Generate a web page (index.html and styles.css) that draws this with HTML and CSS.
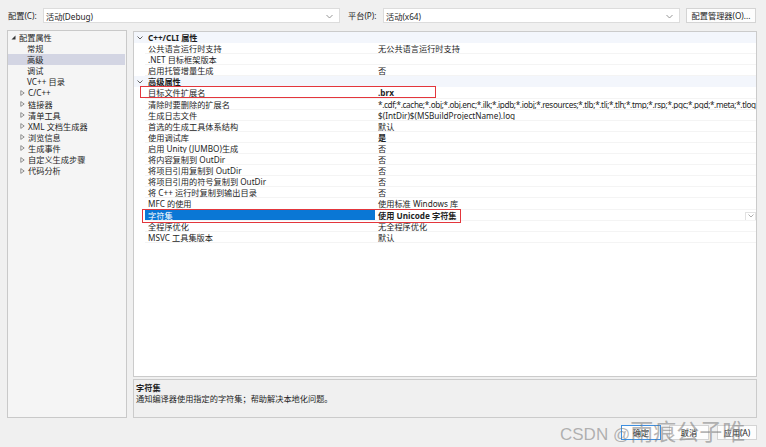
FILE: index.html
```html
<!DOCTYPE html>
<html lang="zh-CN">
<head>
    <meta charset="UTF-8">
    <meta name="viewport" content="width=device-width, initial-scale=1.0">
    <title>属性页</title>
    <link rel="stylesheet" href="styles.css">
</head>
<body>
    <div class="dialog">
        <div class="topbar">
            <span class="lbl">配置(C):</span>
            <div class="combo">
                <span>活动(Debug)</span>
                <svg class="chev" width="7" height="5" viewBox="0 0 7 5"><path d="M0.5 1 L3.5 4 L6.5 1" fill="none" stroke="#8a8a8a" stroke-width="0.9"/></svg>
            </div>
            <span class="lbl plat">平台(P):</span>
            <div class="combo">
                <span>活动(x64)</span>
                <svg class="chev" width="7" height="5" viewBox="0 0 7 5"><path d="M0.5 1 L3.5 4 L6.5 1" fill="none" stroke="#8a8a8a" stroke-width="0.9"/></svg>
            </div>
            <div class="btn mgr">配置管理器(O)...</div>
        </div>

        <div class="main">
            <div class="tree">
                <div class="node root">
                    <svg class="tri" width="5" height="5" viewBox="0 0 5 5"><path d="M4.5 0.5 L4.5 4.5 L0.5 4.5 Z" fill="#333"/></svg>
                    配置属性
                </div>
                <div class="node leaf">常规</div>
                <div class="node leaf selected">高级</div>
                <div class="node leaf">调试</div>
                <div class="node leaf">VC++ 目录</div>
                <div class="node group"><svg class="tri" width="5" height="6" viewBox="0 0 5 6"><path d="M0.8 0.6 L4.2 3 L0.8 5.4 Z" fill="none" stroke="#777" stroke-width="0.8"/></svg>C/C++</div>
                <div class="node group"><svg class="tri" width="5" height="6" viewBox="0 0 5 6"><path d="M0.8 0.6 L4.2 3 L0.8 5.4 Z" fill="none" stroke="#777" stroke-width="0.8"/></svg>链接器</div>
                <div class="node group"><svg class="tri" width="5" height="6" viewBox="0 0 5 6"><path d="M0.8 0.6 L4.2 3 L0.8 5.4 Z" fill="none" stroke="#777" stroke-width="0.8"/></svg>清单工具</div>
                <div class="node group"><svg class="tri" width="5" height="6" viewBox="0 0 5 6"><path d="M0.8 0.6 L4.2 3 L0.8 5.4 Z" fill="none" stroke="#777" stroke-width="0.8"/></svg>XML 文档生成器</div>
                <div class="node group"><svg class="tri" width="5" height="6" viewBox="0 0 5 6"><path d="M0.8 0.6 L4.2 3 L0.8 5.4 Z" fill="none" stroke="#777" stroke-width="0.8"/></svg>浏览信息</div>
                <div class="node group"><svg class="tri" width="5" height="6" viewBox="0 0 5 6"><path d="M0.8 0.6 L4.2 3 L0.8 5.4 Z" fill="none" stroke="#777" stroke-width="0.8"/></svg>生成事件</div>
                <div class="node group"><svg class="tri" width="5" height="6" viewBox="0 0 5 6"><path d="M0.8 0.6 L4.2 3 L0.8 5.4 Z" fill="none" stroke="#777" stroke-width="0.8"/></svg>自定义生成步骤</div>
                <div class="node group"><svg class="tri" width="5" height="6" viewBox="0 0 5 6"><path d="M0.8 0.6 L4.2 3 L0.8 5.4 Z" fill="none" stroke="#777" stroke-width="0.8"/></svg>代码分析</div>
            </div>

            <div class="right">
                <div class="grid">
                    <div class="row section">
                        <div class="exp"><svg width="6" height="4" viewBox="0 0 6 4"><path d="M0.5 0.5 L3 3 L5.5 0.5" fill="none" stroke="#555" stroke-width="0.9"/></svg></div>
                        <div class="name">C++/CLI 属性</div>
                        <div class="value"></div>
                    </div>
                    <div class="row"><div class="exp"></div><div class="name">公共语言运行时支持</div><div class="value">无公共语言运行时支持</div></div>
                    <div class="row"><div class="exp"></div><div class="name">.NET 目标框架版本</div><div class="value"></div></div>
                    <div class="row"><div class="exp"></div><div class="name">启用托管增量生成</div><div class="value">否</div></div>
                    <div class="row section">
                        <div class="exp"><svg width="6" height="4" viewBox="0 0 6 4"><path d="M0.5 0.5 L3 3 L5.5 0.5" fill="none" stroke="#555" stroke-width="0.9"/></svg></div>
                        <div class="name">高级属性</div>
                        <div class="value"></div>
                    </div>
                    <div class="row marked first"><div class="exp"></div><div class="name">目标文件扩展名</div><div class="value bold">.brx</div></div>
                    <div class="row"><div class="exp"></div><div class="name">清除时要删除的扩展名</div><div class="value long">*.cdf;*.cache;*.obj;*.obj.enc;*.ilk;*.ipdb;*.iobj;*.resources;*.tlb;*.tli;*.tlh;*.tmp;*.rsp;*.pgc;*.pgd;*.meta;*.tlog</div></div>
                    <div class="row"><div class="exp"></div><div class="name">生成日志文件</div><div class="value">$(IntDir)$(MSBuildProjectName).log</div></div>
                    <div class="row"><div class="exp"></div><div class="name">首选的生成工具体系结构</div><div class="value">默认</div></div>
                    <div class="row"><div class="exp"></div><div class="name">使用调试库</div><div class="value bold">是</div></div>
                    <div class="row"><div class="exp"></div><div class="name">启用 Unity (JUMBO)生成</div><div class="value">否</div></div>
                    <div class="row"><div class="exp"></div><div class="name">将内容复制到 OutDir</div><div class="value">否</div></div>
                    <div class="row"><div class="exp"></div><div class="name">将项目引用复制到 OutDir</div><div class="value">否</div></div>
                    <div class="row"><div class="exp"></div><div class="name">将项目引用的符号复制到 OutDir</div><div class="value">否</div></div>
                    <div class="row"><div class="exp"></div><div class="name">将 C++ 运行时复制到输出目录</div><div class="value">否</div></div>
                    <div class="row"><div class="exp"></div><div class="name">MFC 的使用</div><div class="value">使用标准 Windows 库</div></div>
                    <div class="row marked second active">
                        <div class="exp"></div>
                        <div class="name">字符集</div>
                        <div class="value bold">使用 Unicode 字符集
                            <span class="drop"><svg width="6" height="4" viewBox="0 0 6 4"><path d="M0.5 0.5 L3 3 L5.5 0.5" fill="none" stroke="#999" stroke-width="0.8"/></svg></span>
                        </div>
                    </div>
                    <div class="row"><div class="exp"></div><div class="name">全程序优化</div><div class="value">无全程序优化</div></div>
                    <div class="row"><div class="exp"></div><div class="name">MSVC 工具集版本</div><div class="value">默认</div></div>
                </div>
                <div class="desc">
                    <div class="desc-title">字符集</div>
                    <div class="desc-text">通知编译器使用指定的字符集；帮助解决本地化问题。</div>
                </div>
            </div>
        </div>

        <div class="footer">
            <div class="btn ok">确定</div>
            <div class="btn">取消</div>
            <div class="btn">应用(A)</div>
            <div class="watermark">CSDN @<span class="cjk">雨痕公子唯</span></div>
        </div>
    </div>
</body>
</html>
```

FILE: styles.css
```css
body {
    margin: 0;
    padding: 0;
    background-color: #f0f0f0;
    font-family: "Noto Sans", "Noto Sans CJK SC", sans-serif;
    font-size: 8.2px;
    color: #1e1e1e;
}

.dialog {
    width: 766px;
    height: 447px;
    position: relative;
    overflow: hidden;
}

.topbar {
    display: flex;
    align-items: center;
    padding: 8px 0 0 8px;
    height: 15px;
}

.lbl {
    width: 35px;
    line-height: 15px;
}

.lbl.plat {
    margin-left: 8px;
}

.combo {
    width: 287px;
    height: 13px;
    border: 1px solid #dcdcdc;
    background-color: #fff;
    display: flex;
    align-items: center;
    justify-content: space-between;
    padding: 0 6px 0 2px;
}

.chev {
    margin-top: 1px;
}

.btn {
    height: 13px;
    line-height: 13px;
    border: 1px solid #d4d4d4;
    background-color: #fdfdfd;
    text-align: center;
}

.btn.mgr {
    width: 68px;
    margin-left: 6px;
}

.main {
    display: flex;
    margin-top: 7px;
}

.tree {
    margin-left: 7px;
    width: 118px;
    height: 385px;
    border: 1px solid #c9c9c9;
    background-color: #f5f5f5;
    padding-top: 1px;
}

.node {
    height: 11.1px;
    line-height: 11.1px;
    display: flex;
    align-items: center;
    white-space: nowrap;
}

.node.root {
    padding-left: 3px;
}

.node.root .tri {
    margin-right: 3px;
}

.node.leaf {
    padding-left: 19px;
}

.node.group {
    padding-left: 12px;
}

.node.group .tri {
    margin-right: 3px;
}

.node.selected {
    background-color: #d3d5e3;
    margin-right: 1px;
}

.right {
    margin-left: 6px;
    width: 624px;
}

.grid {
    margin-top: 1px;
    height: 344px;
    border: 1px solid #cbcbcb;
    background-color: #fff;
}

.row {
    display: flex;
    height: 11.1px;
    line-height: 11.1px;
    position: relative;
    white-space: nowrap;
}

.row .exp {
    width: 11px;
    display: flex;
    align-items: center;
    justify-content: flex-end;
    padding-right: 2px;
    box-sizing: border-box;
}

.row .name {
    width: 230px;
    padding-left: 3px;
    overflow: hidden;
    border-bottom: 1px solid #f4f4f4;
    box-sizing: border-box;
}

.row .value {
    flex: 1;
    padding-left: 3px;
    overflow: hidden;
    border-bottom: 1px solid #f4f4f4;
    box-sizing: border-box;
    position: relative;
}

.row .value.long {
    letter-spacing: -0.36px;
}

.row.section {
    background-color: #f3f6fc;
    font-weight: bold;
}

.row.section .name,
.row.section .value {
    border-bottom: none;
}

.bold {
    font-weight: bold;
}

.row.active .name {
    background-color: #0a77d5;
    color: #fff;
}

.drop {
    position: absolute;
    right: 0;
    top: 2px;
    width: 9px;
    height: 7px;
    border: 1px solid #e2e2e2;
    background-color: #fff;
    display: flex;
    align-items: center;
    justify-content: center;
}

.row.marked::after {
    content: "";
    position: absolute;
    z-index: 2;
    border: 1.5px solid #e3363c;
    pointer-events: none;
}

.row.first::after {
    left: 6px;
    top: -1.5px;
    width: 294px;
    height: 10px;
}

.row.second::after {
    left: 8px;
    top: -1px;
    width: 317px;
    height: 12px;
}

.desc {
    margin-top: 2px;
    height: 36px;
    border: 1px solid #cbcbcb;
    background-color: #f0f0f0;
    padding: 1px 0 0 2px;
}

.desc-title {
    font-weight: bold;
    line-height: 11px;
    margin-top: 1px;
}

.desc-text {
    line-height: 11px;
}

.footer {
    display: flex;
    justify-content: flex-end;
    gap: 8px;
    margin-top: 7px;
    padding-right: 9px;
    position: relative;
}

.footer .btn {
    width: 38px;
}

.footer .btn.ok {
    border-color: #3c8ee0;
}

.watermark {
    position: absolute;
    left: 560px;
    top: -7px;
    font-family: "Liberation Sans", "Noto Sans CJK SC", sans-serif;
    font-size: 17px;
    line-height: 24px;
    color: rgba(120, 120, 120, 0.55);
    white-space: nowrap;
    pointer-events: none;
}

.watermark .cjk {
    font-size: 23px;
    font-family: "Noto Sans CJK SC", sans-serif;
}
```
